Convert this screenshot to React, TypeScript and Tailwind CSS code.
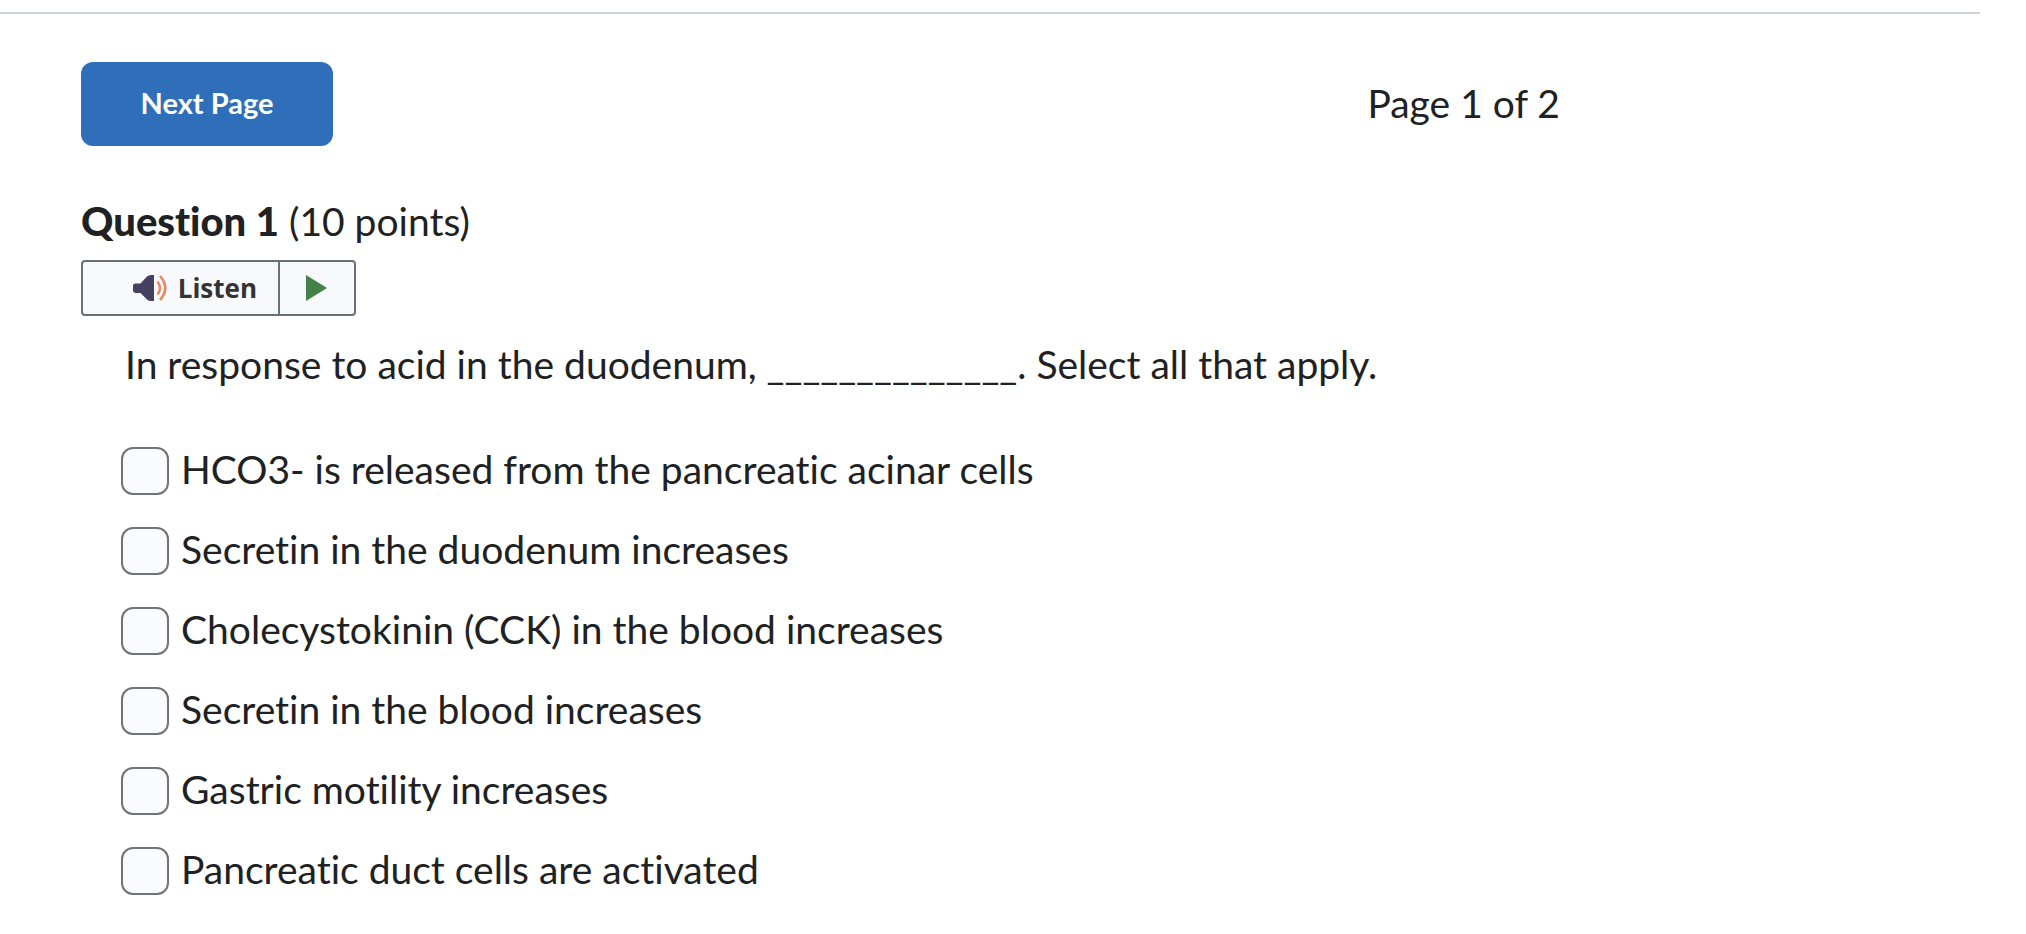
import React, { useState } from 'react';

const ANSWERS = [
    'HCO3- is released from the pancreatic acinar cells',
    'Secretin in the duodenum increases',
    'Cholecystokinin (CCK) in the blood increases',
    'Secretin in the blood increases',
    'Gastric motility increases',
    'Pancreatic duct cells are activated',
];

const SpeakerIcon: React.FC = () => (
    <svg className="h-7 w-9 shrink-0" viewBox="0 0 36 28" fill="none" aria-hidden="true">
        <path d="M1 11.5Q1 9.500 3.5 9.500H8.5L15 2.500Q16.500 1 19 1H22V27H19Q16.500 27 15 25.500L8.500 19H3.500Q1 18.500 1 16.500Z" fill="#444060" />
        <path d="M25.500 7.500Q30.500 14 25.500 20.500" stroke="#e8865a" strokeWidth="2.400" />
        <path d="M28 2Q38.500 14 28 26" stroke="#e8865a" strokeWidth="2.600" />
    </svg>
);

const ListenToolbar: React.FC = () => (
    <div className="flex h-14 w-[275px] overflow-hidden rounded border-2 border-[#6a7077] bg-[#f8f9fd]">
        <button type="button" className="flex flex-1 items-center justify-end gap-2.5 pr-[21px] font-['Open_Sans',sans-serif] text-[26px] font-bold text-[#333333]">
            <SpeakerIcon />
            Listen
        </button>
        <button type="button" aria-label="Play" className="flex w-[76px] items-center justify-center border-l-2 border-[#6a7077]">
            <svg className="h-[26px] w-[22px]" viewBox="0 0 22 26" aria-hidden="true">
                <path d="M0 0L21 13L0 26Z" fill="#43804a" />
            </svg>
        </button>
    </div>
);

interface AnswerOptionProps {
    label: string;
    checked: boolean;
    onToggle: () => void;
}

const AnswerOption: React.FC<AnswerOptionProps> = ({ label, checked, onToggle }) => (
    <label className="flex h-12 items-center gap-3">
        <input
            type="checkbox"
            checked={checked}
            onChange={onToggle}
            className="size-12 shrink-0 appearance-none rounded-xl border-2 border-[#6e7477] bg-[#f9fbff] checked:bg-[#2f6eb8]"
        />
        <span className="pb-1">{label}</span>
    </label>
);

const App: React.FC = () => {
    const [selected, setSelected] = useState<string[]>([]);

    const toggle = (answer: string) => {
        setSelected(prev => (prev.includes(answer) ? prev.filter(a => a !== answer) : [...prev, answer]));
    };

    return (
        <div className="min-h-screen bg-white pt-3 pb-8 font-['Lato',sans-serif] text-[39px] leading-12 text-[#202122] [font-variant-ligatures:none]">
            <hr className="mr-[46px] border-t-2 border-[#cdd3d9]" />
            <main className="px-[81px] pt-12">
                <header className="mr-[385px] flex items-center justify-between">
                    <button type="button" className="h-[84px] w-[252px] rounded-xl bg-[#2f6eb8] pb-0.5 text-[29px] font-bold text-white">
                        Next Page
                    </button>
                    <span className="pb-0.5">Page 1 of 2</span>
                </header>
                <h1 className="mt-[51px] mb-[15px]">
                    <strong className="text-[40px] leading-12 font-black">Question 1</strong> (10 points)
                </h1>
                <ListenToolbar />
                <fieldset className="mt-6 pl-10">
                    <legend className="mb-[59px] pl-1">
                        In response to acid in the duodenum, ______________. Select all that apply.
                    </legend>
                    <div className="flex flex-col gap-8">
                        {ANSWERS.map(answer => (
                            <AnswerOption
                                key={answer}
                                label={answer}
                                checked={selected.includes(answer)}
                                onToggle={() => toggle(answer)}
                            />
                        ))}
                    </div>
                </fieldset>
            </main>
        </div>
    );
};

export default App;
